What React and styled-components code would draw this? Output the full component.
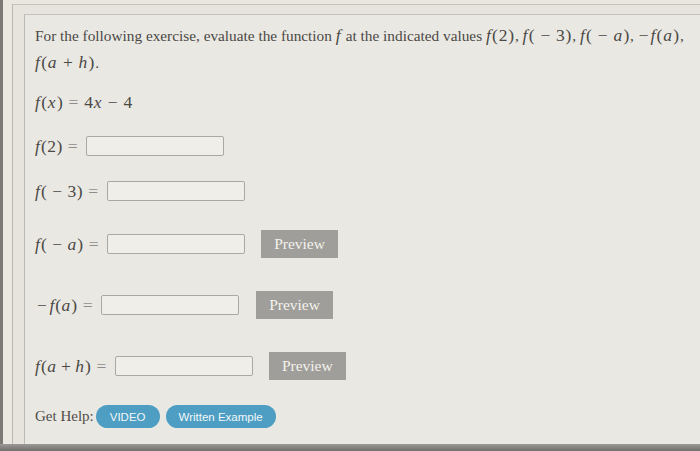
import React from "react";
import styled, { createGlobalStyle } from "styled-components";

const Global = createGlobalStyle`
  html, body { margin: 0; padding: 0; }
  body { background: #e9e7e0; font-family: "Liberation Serif", "Times New Roman", serif; }
`;

const Page = styled.div`
  width: 700px;
  height: 451px;
  display: flex;
  flex-direction: column;
  overflow: hidden;
  background: #e9e7e0;
`;

const Screen = styled.div`
  flex: 1;
  display: flex;
  min-height: 0;
`;

const LeftStrip = styled.div`
  width: 3px;
  background: #7a7975;
`;

const OuterFrame = styled.div`
  flex: 1;
  margin: 4px 0 0 9px;
  border-left: 1px solid #b9b7b0;
  border-top: 1px solid #c4c2bb;
  display: flex;
  background: #e6e4dd;
`;

const Panel = styled.div`
  flex: 1;
  margin: 9px 0 0 11px;
  border-left: 1px solid #bdbbb4;
  border-top: 1px solid #c2c0b9;
  padding: 7px 8px 0 10px;
  background: #eae8e2;
  color: #4b4a47;
`;

const Dock = styled.div`
  height: 7px;
  background: linear-gradient(#9a9995, #6f6e6b);
`;

const Prompt = styled.p`
  margin: 0;
  font-size: 15.3px;
  line-height: 26px;
  color: #4a4946;
  white-space: nowrap;
`;

const Var = styled.i`
  font-family: "Liberation Serif", "Times New Roman", serif;
  font-style: italic;
  padding-right: ${(p) => p.$r || 0.5}px;
`;

const Op = styled.span`
  color: ${(p) => (p.$light ? "#8f8e8a" : "inherit")};
  padding: 0 ${(p) => p.$pad || 0}px;
`;

const MathText = styled.span`
  font-family: "Liberation Serif", "Times New Roman", serif;
  font-size: 17.5px;
  color: #4a4946;
  white-space: nowrap;
  letter-spacing: 0.8px;
`;

const Definition = styled.div`
  margin-top: 16px;
`;

const Row = styled.div`
  display: flex;
  align-items: center;
  margin-top: ${(p) => p.$top}px;
  height: ${(p) => p.$h || 22}px;
`;

const Label = styled.span`
  font-family: "Liberation Serif", "Times New Roman", serif;
  font-size: 17.5px;
  letter-spacing: 0.5px;
  color: #4a4946;
  white-space: nowrap;
  margin-right: 3px;
`;

const Input = styled.input`
  width: 138px;
  height: 20px;
  box-sizing: border-box;
  border: 1px solid #a9a8a3;
  border-radius: 2px;
  background: #efeee9;
  outline: none;
  padding: 0 4px;
`;

const PreviewButton = styled.button`
  margin-left: ${(p) => p.$gap}px;
  width: 77px;
  height: 28px;
  border: none;
  background: #9f9e9a;
  color: #f4f2ec;
  font-family: "Liberation Serif", "Times New Roman", serif;
  font-size: 15.5px;
  padding: 0;
`;

const HelpRow = styled.div`
  display: flex;
  align-items: center;
  margin-top: 25px;
  gap: 6px;
`;

const HelpLabel = styled.span`
  font-size: 15px;
  color: #4f4e4a;
  margin-right: -4px;
`;

const PillButton = styled.button`
  height: 23px;
  padding: 0 ${(p) => p.$pad}px;
  border: none;
  border-radius: 12px;
  background: #4d9ec2;
  color: #f3f7f9;
  font-family: "Liberation Sans", Arial, sans-serif;
  font-size: 11.5px;
`;

const Eq = () => <Op $light $pad={5}>=</Op>;
const Minus = () => <Op $pad={5}>−</Op>;

export default function App() {
  return (
    <Page>
      <Global />
      <Screen>
        <LeftStrip />
        <OuterFrame>
          <Panel>
            <Prompt>
              For the following exercise, evaluate the function <MathText><Var>f</Var></MathText> at the indicated values{" "}
              <MathText><Var>f</Var>(2)</MathText>,{" "}
              <MathText><Var>f</Var>(<Minus />3)</MathText>,{" "}
              <MathText><Var>f</Var>(<Minus /><Var>a</Var>)</MathText>,{" "}
              <MathText><Op $pad={1}>−</Op><Var>f</Var>(<Var>a</Var>)</MathText>,
              <br />
              <MathText><Var>f</Var>(<Var>a</Var><Op $pad={5}>+</Op><Var>h</Var>)</MathText>.
            </Prompt>

            <Definition>
              <MathText><Var>f</Var>(<Var>x</Var>)<Eq />4<Var>x</Var><Minus />4</MathText>
            </Definition>

            <Row $top={22}>
              <Label><Var>f</Var>(2)<Eq /></Label>
              <Input />
            </Row>

            <Row $top={23}>
              <Label><Var>f</Var>(<Minus />3)<Eq /></Label>
              <Input />
            </Row>

            <Row $top={28} $h={28}>
              <Label><Var>f</Var>(<Minus /><Var>a</Var>)<Eq /></Label>
              <Input />
              <PreviewButton $gap={16}>Preview</PreviewButton>
            </Row>

            <Row $top={33} $h={28}>
              <Label><Op $pad={2}>−</Op><Var>f</Var>(<Var>a</Var>)<Eq /></Label>
              <Input />
              <PreviewButton $gap={17}>Preview</PreviewButton>
            </Row>

            <Row $top={33} $h={28}>
              <Label><Var>f</Var>(<Var>a</Var><Op $pad={4}>+</Op><Var>h</Var>)<Eq /></Label>
              <Input />
              <PreviewButton $gap={16}>Preview</PreviewButton>
            </Row>

            <HelpRow>
              <HelpLabel>Get Help:</HelpLabel>
              <PillButton $pad={14}>VIDEO</PillButton>
              <PillButton $pad={13}>Written Example</PillButton>
            </HelpRow>
          </Panel>
        </OuterFrame>
      </Screen>
      <Dock />
    </Page>
  );
}
